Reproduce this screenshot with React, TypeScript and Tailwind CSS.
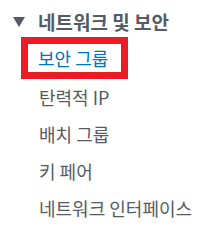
export default function App() {
  const items = ["탄력적 IP", "배치 그룹", "키 페어", "네트워크 인터페이스"];

  return (
    <div className="w-[206px] h-[226px] bg-white overflow-hidden font-['Noto_Sans_CJK_KR','Noto_Sans',sans-serif]">
      {/* section header */}
      <div className="flex items-center h-[30px] mt-[7px] pl-[13px]">
        <svg width="12" height="10" viewBox="0 0 12 10" className="shrink-0">
          <path d="M0 0 H12 L6 10 Z" fill="#545b64" />
        </svg>
        <span className="ml-[13px] text-[19px] font-bold text-[#545b64] whitespace-nowrap">
          네트워크 및 보안
        </span>
      </div>

      {/* highlighted active link */}
      <div className="ml-[21px] w-[107px] h-[42px] border-[7px] border-[#ed1c24] flex items-center pl-[10px]">
        <span className="text-[18px] text-[#0073bb] whitespace-nowrap">보안 그룹</span>
      </div>

      {items.map((item) => (
        <div key={item} className="h-[37px] flex items-center pl-[39px]">
          <span className="text-[18px] text-[#545b64] whitespace-nowrap">{item}</span>
        </div>
      ))}
    </div>
  );
}
